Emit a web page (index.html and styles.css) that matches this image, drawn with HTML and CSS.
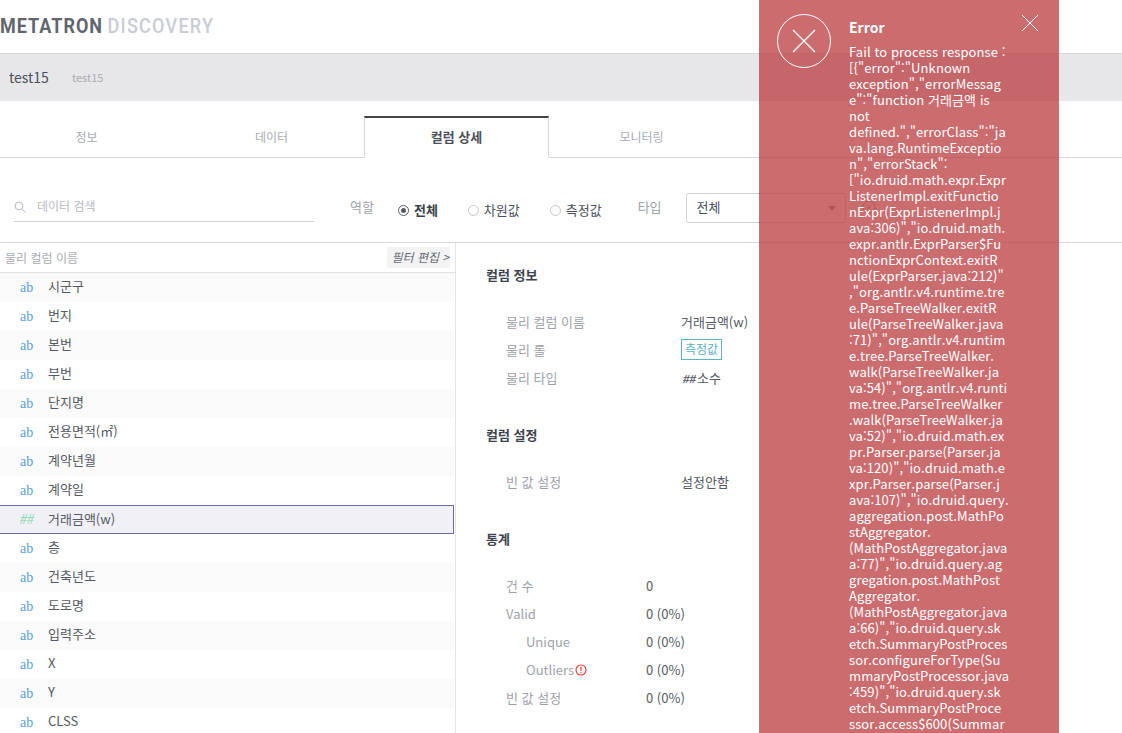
FILE: index.html
```html
<!DOCTYPE html>
<html lang="ko">
<head>
<meta charset="utf-8">
<title>Metatron Discovery</title>
<link rel="stylesheet" href="styles.css">
</head>
<body>
<div class="page">
  <header class="top"><div class="logo"><b>METATRON</b><span>DISCOVERY</span></div></header>
  <div class="titlebar"><span class="name">test15</span><span class="desc">test15</span></div>
  <nav class="tabs">
    <a class="tab">정보</a>
    <a class="tab">데이터</a>
    <a class="tab active">컬럼 상세</a>
    <a class="tab">모니터링</a>
  </nav>
  <div class="filters">
    <div class="search">
      <svg class="search-icon" viewBox="0 0 12 12" width="12" height="12"><circle cx="5" cy="5" r="3.900" fill="none" stroke="#b7b9c2"/><path d="M8 8l3.500 3.500" stroke="#b7b9c2" fill="none"/></svg>
      <span>데이터 검색</span>
    </div>
    <span class="flabel role">역할</span>
    <label class="radio on"><i class="dot"></i>전체</label>
    <label class="radio r2"><i class="dot"></i>차원값</label>
    <label class="radio r3"><i class="dot"></i>측정값</label>
    <span class="flabel type">타입</span>
    <div class="select"><span>전체</span><i class="caret"></i></div>
    <svg class="clear" viewBox="0 0 14 14" width="14" height="14"><circle cx="7" cy="7" r="6" fill="none" stroke="#999"/><path d="M5.500 5.500l3 3M8.500 5.500l-3 3" stroke="#999"/></svg>
  </div>
  <main class="content">
    <section class="list">
      <div class="list-head"><span>물리 컬럼 이름</span><em>필터 편집 &gt;</em></div>
      <ul class="rows">
        <li class="row"><i class="ab">ab</i>시군구</li>
        <li class="row"><i class="ab">ab</i>번지</li>
        <li class="row"><i class="ab">ab</i>본번</li>
        <li class="row"><i class="ab">ab</i>부번</li>
        <li class="row"><i class="ab">ab</i>단지명</li>
        <li class="row"><i class="ab">ab</i>전용면적(㎡)</li>
        <li class="row"><i class="ab">ab</i>계약년월</li>
        <li class="row"><i class="ab">ab</i>계약일</li>
        <li class="row selected"><i class="num">##</i>거래금액(w)</li>
        <li class="row"><i class="ab">ab</i>층</li>
        <li class="row"><i class="ab">ab</i>건축년도</li>
        <li class="row"><i class="ab">ab</i>도로명</li>
        <li class="row"><i class="ab">ab</i>입력주소</li>
        <li class="row"><i class="ab">ab</i>X</li>
        <li class="row"><i class="ab">ab</i>Y</li>
        <li class="row"><i class="ab">ab</i>CLSS</li>
      </ul>
    </section>
    <section class="detail">
      <h3 class="h-info">컬럼 정보</h3>
      <dl class="info">
        <div class="kv"><dt>물리 컬럼 이름</dt><dd>거래금액(w)</dd></div>
        <div class="kv"><dt>물리 롤</dt><dd><span class="badge">측정값</span></dd></div>
        <div class="kv"><dt>물리 타입</dt><dd class="ntype"><i class="hash">##</i>소수</dd></div>
      </dl>
      <h3 class="h-set">컬럼 설정</h3>
      <dl class="info">
        <div class="kv"><dt>빈 값 설정</dt><dd>설정안함</dd></div>
      </dl>
      <h3 class="h-stat">통계</h3>
      <dl class="info stats">
        <div class="kv"><dt>건 수</dt><dd>0</dd></div>
        <div class="kv"><dt>Valid</dt><dd>0 (0%)</dd></div>
        <div class="kv sub"><dt>Unique</dt><dd>0 (0%)</dd></div>
        <div class="kv sub"><dt>Outliers<svg class="warn" viewBox="0 0 12 12" width="12" height="12"><circle cx="6" cy="6" r="5" fill="none" stroke="#e8352b" stroke-width="1.100"/><path d="M6 2.800v4" stroke="#e8352b" stroke-width="1.200"/><path d="M6 8v1.200" stroke="#e8352b" stroke-width="1.200"/></svg></dt><dd>0 (0%)</dd></div>
        <div class="kv"><dt>빈 값 설정</dt><dd>0 (0%)</dd></div>
      </dl>
    </section>
  </main>
  <aside class="toast">
    <svg class="toast-icon" viewBox="0 0 54 54" width="54" height="54"><circle cx="27" cy="27" r="26.500" fill="none" stroke="#fff"/><path d="M16 16l22 22M38 16L16 38" stroke="#fff" stroke-width="1.300" fill="none"/></svg>
    <div class="toast-body">
      <h4>Error</h4>
      <p>Fail to process response :<br>[{"error":"Unknown<br>exception","errorMessag<br>e":"function 거래금액 is<br>not<br>defined.","errorClass":"ja<br>va.lang.RuntimeExceptio<br>n","errorStack":<br>["io.druid.math.expr.Expr<br>ListenerImpl.exitFunctio<br>nExpr(ExprListenerImpl.j<br>ava:306)","io.druid.math.<br>expr.antlr.ExprParser$Fu<br>nctionExprContext.exitR<br>ule(ExprParser.java:212)"<br>,"org.antlr.v4.runtime.tre<br>e.ParseTreeWalker.exitR<br>ule(ParseTreeWalker.java<br>:71)","org.antlr.v4.runtim<br>e.tree.ParseTreeWalker.<br>walk(ParseTreeWalker.ja<br>va:54)","org.antlr.v4.runti<br>me.tree.ParseTreeWalker<br>.walk(ParseTreeWalker.ja<br>va:52)","io.druid.math.ex<br>pr.Parser.parse(Parser.ja<br>va:120)","io.druid.math.e<br>xpr.Parser.parse(Parser.j<br>ava:107)","io.druid.query.<br>aggregation.post.MathPo<br>stAggregator.<br>(MathPostAggregator.java<br>a:77)","io.druid.query.ag<br>gregation.post.MathPost<br>Aggregator.<br>(MathPostAggregator.java<br>a:66)","io.druid.query.sk<br>etch.SummaryPostProces<br>sor.configureForType(Su<br>mmaryPostProcessor.java<br>:459)","io.druid.query.sk<br>etch.SummaryPostProce<br>ssor.access$600(Summar</p>
    </div>
    <svg class="toast-close" viewBox="0 0 18 18" width="18" height="18"><path d="M1 1l16 16M17 1L1 17" stroke="#fff" stroke-width="1" fill="none"/></svg>
  </aside>
</div>
</body>
</html>
```

FILE: styles.css
```css
* { box-sizing: border-box; }
html, body { margin: 0; padding: 0; height: 100%; overflow: hidden; background: #fff; }
body { font-family: "Noto Sans CJK KR", "Noto Sans", sans-serif; font-size: 13px; font-weight: 400; color: #555a63; }
.page { position: relative; width: 1122px; height: 733px; overflow: hidden; }

.top { height: 54px; border-bottom: 1px solid #d8d8dc; display: flex; align-items: center; }
.logo { font-family: "Roboto", sans-serif; font-size: 20px; letter-spacing: 1.100px; display: flex; gap: 5px; line-height: 1; margin-top: -1px; transform: scaleX(0.9); transform-origin: left center; }
.logo b { color: #5f6670; font-weight: 700; }
.logo span { color: #c9ccd6; font-weight: 500; letter-spacing: 1.400px; }

.titlebar { height: 47px; background: #e7e7e9; display: flex; align-items: center; padding-left: 9px; padding-bottom: 1px; }
.name { font-size: 14px; color: #4b515b; width: 63px; }
.desc { font-size: 11px; color: #a9abb4; }

.tabs { display: flex; height: 57px; padding-top: 15px; margin-left: -6px; border-bottom: 1px solid #d8d8dc; }
.tab { width: 185px; height: 42px; display: flex; align-items: center; justify-content: center; font-size: 12px; color: #a9abb4; padding-bottom: 2px; }
.tab.active { background: #fff; border: 1px solid #d8d8dc; border-top: 2px solid #444; border-bottom: 1px solid #fff; color: #4b515b; font-weight: 700; font-size: 13px; padding-bottom: 3px; }

.filters { position: relative; height: 85px; border-bottom: 1px solid #d8d8dc; display: flex; align-items: flex-start; padding-left: 14px; }
.search { width: 300px; height: 29px; margin-top: 35px; border-bottom: 1px solid #d0d0d5; display: flex; align-items: center; gap: 11px; color: #b7b9c2; font-size: 12px; padding-bottom: 4px; }
.search-icon { flex: none; margin-top: 3px; }
.flabel { font-size: 13px; color: #a0a2ab; margin-top: 41px; line-height: 16px; }
.role { margin-left: 36px; }
.radio { display: flex; align-items: center; gap: 5px; margin-top: 42px; margin-left: 24px; font-size: 13px; color: #4b515b; line-height: 20px; height: 20px; }
.radio.on { font-weight: 700; color: #3c424c; }
.radio.r2, .radio.r3 { margin-left: 30px; }
.dot { width: 11px; height: 11px; border-radius: 50%; border: 1px solid #c4c6cd; display: block; position: relative; flex: none; }
.on .dot { border-color: #555a63; }
.on .dot::after { content: ""; position: absolute; left: 2px; top: 2px; width: 5px; height: 5px; border-radius: 50%; background: #555a63; }
.type { margin-left: 36px; }
.select { width: 160px; height: 30px; margin-top: 35px; margin-left: 24px; border: 1px solid #d0d0d5; border-radius: 2px; display: flex; align-items: center; justify-content: space-between; padding: 0 9px 4px 10px; font-size: 13px; color: #4b515b; }
.caret { width: 0; height: 0; border-left: 4px solid transparent; border-right: 4px solid transparent; border-top: 5px solid #999; margin-top: 4px; }
.clear { margin-top: 42px; margin-left: 16px; flex: none; }

.content { display: flex; height: 491px; }
.list { width: 456px; flex: none; border-right: 1px solid #e4e4e8; }
.list-head { height: 30px; border-bottom: 1px solid #e2e2e6; display: flex; justify-content: space-between; align-items: center; padding: 0 5px; font-size: 12px; color: #a9abb4; }
.list-head em { font-size: 12px; font-style: italic; color: #666b75; background: #f3f3f4; padding: 0 1px 0 4px; height: 21px; line-height: 20px; display: block; }
.rows { list-style: none; margin: 0; padding: 0; }
.row { height: 29px; display: flex; align-items: center; padding: 0 0 4px 20px; font-size: 13px; color: #555a63; margin-right: 1px; }
.row:nth-child(odd) { background: #fafafa; }
.row.selected { background: #f0f0f6; border: 1px solid #6a6aa8; margin-left: -1px; padding-bottom: 3px; }
.row i { font-style: normal; width: 28px; flex: none; font-family: "Liberation Serif", serif; font-size: 14px; font-weight: 400; line-height: 1; margin-top: 4px; }
.ab { color: #5a9fe0; }
.row .num { color: #86d6a9; font-style: italic; font-size: 14px; }

.detail { flex: 1; padding: 0 0 0 30px; }
h3 { margin: 0; font-size: 13px; font-weight: 700; color: #3c424c; line-height: 18px; }
.h-info { margin-top: 23px; }
.h-set, .h-stat { margin-top: 35px; }
.info { margin: 23px 0 0; padding-left: 20px; }
.kv { display: flex; height: 28px; align-items: center; font-size: 13px; }
.kv dt { width: 175px; color: #a0a2ab; display: flex; align-items: center; }
.kv dd { margin: 0; color: #555a63; }
.stats .kv dt { width: 140px; }
.stats .sub dt { padding-left: 20px; }
.warn { margin-left: 1px; margin-top: 2px; }
.badge { display: inline-block; border: 1px solid #5cb2c4; color: #5cb2c4; height: 21px; line-height: 18px; padding: 0 3px; font-size: 12px; vertical-align: middle; }
.hash { font-style: italic; font-size: 13px; font-weight: 700; margin-right: 1px; font-family: "Liberation Serif", serif; }
.ntype { padding-left: 2px; }

.toast { position: absolute; left: 759px; top: 0; width: 300px; height: 733px; background: rgba(186, 62, 66, 0.76); color: #fff; }
.toast-icon { position: absolute; left: 18px; top: 14px; }
.toast-close { position: absolute; left: 262px; top: 14px; }
.toast-body { position: absolute; left: 90px; top: 18px; width: 175px; }
.toast h4 { margin: 0; font-size: 14px; line-height: 18px; font-weight: 700; }
.toast p { margin: 8px 0 0; font-size: 13px; letter-spacing: 0.100px; font-weight: 400; line-height: 16px; }
```
